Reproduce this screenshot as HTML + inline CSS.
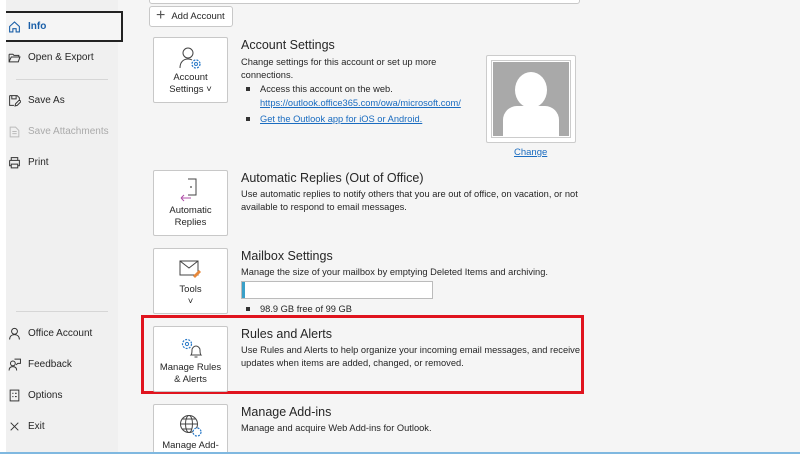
<!DOCTYPE html>
<html><head><meta charset="utf-8"><style>
*{margin:0;padding:0;box-sizing:border-box}
html,body{width:800px;height:454px;overflow:hidden}
body{background:#f5f5f5;font-family:"Liberation Sans",sans-serif;color:#262626;position:relative}
.side{position:absolute;left:0;top:0;width:118px;height:454px;background:#f0f0f0;border-left:6px solid #fff}
.item{position:absolute;left:2px;font-size:10px;display:flex;align-items:center;gap:7px;color:#262626}
.item svg{width:13px;height:13px}
.sel{position:absolute;left:0;top:11px;width:117px;height:31px;border:2px solid #222;border-left:none;background:#f5f5f5}
.sep{position:absolute;left:10px;width:92px;height:1px;background:#d6d6d6}
.tile{position:absolute;left:153px;width:75px;background:#fff;border:1px solid #c8c8c8;border-radius:2px;font-size:9.5px;text-align:center;line-height:12px;color:#262626}
.tile svg{display:block;margin:0 auto}
h2{position:absolute;left:241px;font-size:12.5px;font-weight:normal;color:#262626}
p.d{position:absolute;left:241px;font-size:9.3px;line-height:13px;color:#262626}
a{color:#1a6cc0;text-decoration:underline}
.bul{position:absolute;left:246px;font-size:9.3px;line-height:14px}
.bul::before{content:"";position:absolute;left:0;top:5px;width:4px;height:4px;background:#333}
.bul span{display:block;padding-left:14px}
</style></head><body>
<div class="side">
<div class="sel"></div>
<div class="item" style="top:20px;font-weight:bold;color:#1a5fa8"><svg viewBox="0 0 12 12"><path d="M1.5 6L6 1.8 10.5 6V11H7.5V8H4.5V11H1.5Z" fill="none" stroke="#1a5fa8" stroke-width="1"/></svg>Info</div>
<div class="item" style="top:51px"><svg viewBox="0 0 12 12"><path d="M1 3h3.5l1 1H10v1.5M1 3v7h8.5L11 5.5H3L1 10" fill="none" stroke="#333" stroke-width="0.9"/></svg>Open &amp; Export</div>
<div class="sep" style="top:79px"></div>
<div class="item" style="top:94px"><svg viewBox="0 0 12 12"><path d="M1.5 1.5h7l2 2v3M1.5 1.5v9h4M3.5 1.5v3h4v-3M6.5 11l.5-2 3.5-3.5 1.5 1.5L8.5 10.5z" fill="none" stroke="#333" stroke-width="0.9"/></svg>Save As</div>
<div class="item" style="top:125px;color:#aaa"><svg viewBox="0 0 12 12"><path d="M2 2h5l3 3v6H2zM4 6h4M4 8h4" fill="none" stroke="#bbb" stroke-width="0.9"/></svg>Save Attachments</div>
<div class="item" style="top:156px"><svg viewBox="0 0 12 12"><path d="M3 4V1.5h6V4M1.5 4h9v5H9M3 9H1.5V4M3 7.5h6V11H3z" fill="none" stroke="#333" stroke-width="0.9"/></svg>Print</div>
<div class="sep" style="top:311px"></div>
<div class="item" style="top:327px"><svg viewBox="0 0 12 12"><circle cx="6" cy="4" r="2.7" fill="none" stroke="#333" stroke-width="0.9"/><path d="M1.5 11.5c0-3 2-4.5 4.5-4.5s4.5 1.5 4.5 4.5" fill="none" stroke="#333" stroke-width="0.9"/></svg>Office Account</div>
<div class="item" style="top:358px"><svg viewBox="0 0 12 12"><circle cx="4.5" cy="5" r="2.2" fill="none" stroke="#333" stroke-width="0.9"/><path d="M1 11.5c0-2.5 1.5-3.5 3.5-3.5s3.5 1 3.5 3.5M6 1h5.5v4H9L7.5 6.3" fill="none" stroke="#333" stroke-width="0.9"/></svg>Feedback</div>
<div class="item" style="top:389px"><svg viewBox="0 0 12 12"><rect x="2" y="1" width="8" height="10" fill="none" stroke="#333" stroke-width="0.9"/><path d="M4 4h1M4 7h1M6.5 4h1.5M6.5 7h1.5" stroke="#333"/></svg>Options</div>
<div class="item" style="top:420px"><svg viewBox="0 0 12 12"><path d="M2.5 2.5l7 7M9.5 2.5l-7 7" stroke="#333" stroke-width="0.9"/></svg>Exit</div>
</div>

<div style="position:absolute;left:149px;top:-6px;width:431px;height:10px;background:#fff;border:1px solid #c8c8c8;border-radius:3px"></div>
<div style="position:absolute;left:149px;top:6px;width:84px;height:21px;background:#fff;border:1px solid #c8c8c8;border-radius:3px;font-size:9.5px;display:flex;align-items:center;padding-left:6px"><span style="font-size:16px;color:#555;font-weight:200;margin-right:6px;margin-top:-2px">+</span>Add Account</div>

<div class="tile" style="top:37px;height:66px"><svg width="30" height="30" viewBox="0 0 30 30" style="margin-top:6px"><circle cx="12" cy="9" r="5" fill="none" stroke="#444" stroke-width="1"/><path d="M4 24c0-6 3.5-9 8-9 1.5 0 3 .3 4 1" fill="none" stroke="#444" stroke-width="1"/><circle cx="20" cy="20" r="4" fill="none" stroke="#2a7ac8" stroke-width="1.3" stroke-dasharray="2 1.2"/><circle cx="20" cy="20" r="1.5" fill="none" stroke="#2a7ac8"/></svg><div style="margin-top:-2px">Account<br>Settings ˅</div></div>
<h2 style="top:38px">Account Settings</h2>
<p class="d" style="top:56px;width:240px">Change settings for this account or set up more connections.</p>
<div class="bul" style="top:82px"><span>Access this account on the web.</span><span><a>https://outlook.office365.com/owa/microsoft.com/</a></span></div>
<div class="bul" style="top:112px"><span><a>Get the Outlook app for iOS or Android.</a></span></div>

<div style="position:absolute;left:486px;top:55px;width:90px;height:88px;background:#fff;border:1px solid #ccc;border-radius:2px"><div style="position:absolute;left:5px;top:5px;width:78px;height:76px;background:#a9a9a9;border:1px solid #fff;outline:1px solid #ccc;overflow:hidden"><div style="position:absolute;left:22px;top:10px;width:32px;height:36px;border-radius:50%;background:#fff"></div><div style="position:absolute;left:10px;top:44px;width:56px;height:40px;border-radius:14px 14px 0 0;background:#fff"></div></div></div>
<div style="position:absolute;left:514px;top:147px;font-size:9.5px"><a>Change</a></div>

<div class="tile" style="top:170px;height:66px"><svg width="24" height="26" viewBox="0 0 24 26" style="margin-top:6px"><path d="M9 2h8v16H9" fill="none" stroke="#444"/><circle cx="12" cy="10" r=".9" fill="#444"/><path d="M2 21h10M2 21l3-3M2 21l3 3" fill="none" stroke="#b04fa8" stroke-width="1"/></svg><div style="margin-top:2px">Automatic<br>Replies</div></div>
<h2 style="top:171px">Automatic Replies (Out of Office)</h2>
<p class="d" style="top:188px;width:340px">Use automatic replies to notify others that you are out of office, on vacation, or not available to respond to email messages.</p>

<div class="tile" style="top:248px;height:66px"><svg width="26" height="24" viewBox="0 0 26 24" style="margin-top:9px"><rect x="2" y="3" width="18" height="14" fill="none" stroke="#444"/><path d="M2 3l9 7 9-7" fill="none" stroke="#444"/><path d="M15 18l6-6 2 2-6 6z" fill="#e8883a"/></svg><div style="margin-top:2px">Tools<br>˅</div></div>
<h2 style="top:249px">Mailbox Settings</h2>
<p class="d" style="top:266px">Manage the size of your mailbox by emptying Deleted Items and archiving.</p>
<div style="position:absolute;left:241px;top:281px;width:192px;height:18px;background:#fff;border:1px solid #bbb"><div style="width:3px;height:100%;background:#3aa0c8"></div></div>
<div class="bul" style="top:302px"><span>98.9 GB free of 99 GB</span></div>

<div style="position:absolute;left:141px;top:315px;width:443px;height:79px;border:3px solid #e0141e"></div>
<div class="tile" style="top:326px;height:66px"><svg width="26" height="24" viewBox="0 0 26 24" style="margin-top:9px"><circle cx="9" cy="8" r="4.5" fill="none" stroke="#2a7ac8" stroke-width="1.2" stroke-dasharray="2 1.2"/><circle cx="9" cy="8" r="1.6" fill="none" stroke="#2a7ac8"/><path d="M13 19c1-1 1-3 1-5s2-4 4-4 4 2 4 4 0 4 1 5zM16.5 21h3" fill="none" stroke="#444"/></svg><div style="margin-top:2px">Manage Rules<br>&amp; Alerts</div></div>
<h2 style="top:327px">Rules and Alerts</h2>
<p class="d" style="top:344px;width:340px">Use Rules and Alerts to help organize your incoming email messages, and receive updates when items are added, changed, or removed.</p>

<div class="tile" style="top:404px;height:60px"><svg width="26" height="26" viewBox="0 0 26 26" style="margin-top:8px"><circle cx="11" cy="11" r="8.5" fill="none" stroke="#444"/><ellipse cx="11" cy="11" rx="3.5" ry="8.5" fill="none" stroke="#444"/><path d="M2.5 11h17M4 6h14M4 16h10" fill="none" stroke="#444"/><circle cx="19" cy="19" r="4" fill="#fff" stroke="#2a7ac8" stroke-width="1.2" stroke-dasharray="2 1.2"/></svg><div style="margin-top:1px">Manage Add-</div></div>
<h2 style="top:405px">Manage Add-ins</h2>
<p class="d" style="top:422px">Manage and acquire Web Add-ins for Outlook.</p>

<div style="position:absolute;left:0;top:452px;width:800px;height:2px;background:#7fb8e0"></div>
</body></html>
